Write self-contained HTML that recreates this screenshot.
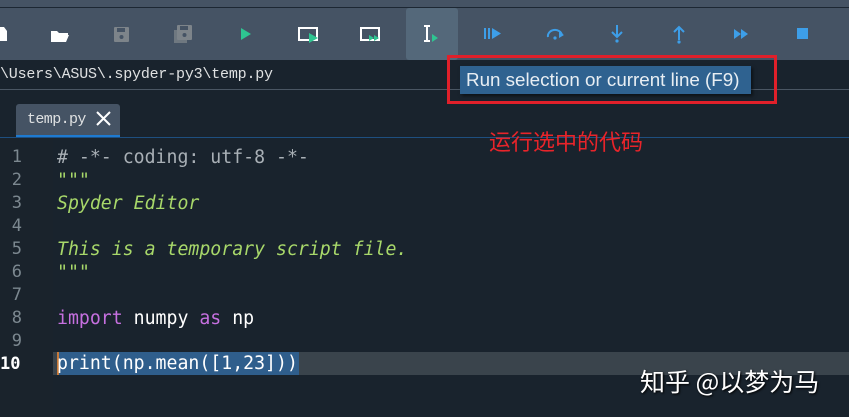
<!DOCTYPE html>
<html><head><meta charset="utf-8"><style>
body{margin:0;width:849px;height:417px;overflow:hidden;background:#19232d;position:relative;font-family:"Liberation Sans",sans-serif}
.abs{position:absolute}
.tb{left:0;top:0;width:849px;height:60px;background:#455364}
.ln{left:0;top:7px;width:849px;height:1px;background:#1c2733}
.path{left:0;top:66px;color:#dfe1e2;font-family:"Liberation Mono","Noto Sans CJK SC",monospace;font-size:15px;letter-spacing:-0.2px}
.code{font-family:"DejaVu Sans Mono",monospace;font-size:18.2px;position:absolute;left:57px;white-space:pre}
.num{font-family:"DejaVu Sans Mono",monospace;font-size:17px;position:absolute;left:8px;color:#7c8890;width:14px;text-align:right}
</style></head><body>
<div class="abs tb"></div>
<div class="abs ln"></div>
<div class="abs" style="left:406px;top:8px;width:52px;height:52px;background:#54687a;border-radius:3px"></div>
<svg class="abs" style="left:0;top:0" width="849" height="60">
<path d="M-2 27h6l3 4v10h-9z" fill="#fff"/>
<path d="M51 31h6l2 2h9v2h-14l-3 7z M51 42l3-7h15l-3 7z" fill="#fff"/>
<rect x="114" y="27" width="15" height="15" rx="1" fill="#7d848a"/><rect x="117" y="28" width="8" height="4" fill="#455364"/><circle cx="121.5" cy="37" r="2" fill="#455364"/>
<rect x="174" y="30" width="13" height="13" fill="#6f7880"/><rect x="177" y="25" width="15" height="15" rx="1" fill="#7d848a"/><rect x="180" y="26" width="8" height="4" fill="#455364"/><circle cx="184.5" cy="35" r="2" fill="#455364"/>
<path d="M241 28l10 6-10 6z" fill="#2ec591"/>
<rect x="299" y="28" width="18" height="12" fill="none" stroke="#fff" stroke-width="2"/><path d="M309 33l9 5-9 5z" fill="#2ec591"/>
<rect x="361" y="28" width="18" height="12" fill="none" stroke="#fff" stroke-width="2"/><path d="M369 35l5 3-5 3z M374 35l5 3-5 3z" fill="#2ec591"/>
<path d="M424 26h6M424 41h6M427 26v15" stroke="#fff" stroke-width="2"/><path d="M432 34l6 4-6 4z" fill="#2ec591"/>
<path d="M485 28v11M489 28v11" stroke="#3d9ee8" stroke-width="2"/><path d="M492 28l9 5.5-9 5.5z" fill="#3d9ee8"/>
<path d="M548 37a7 6 0 0 1 14 -2" fill="none" stroke="#3d9ee8" stroke-width="2"/><path d="M559 32l5 3-5 3z" fill="#3d9ee8"/><circle cx="555" cy="38" r="1.6" fill="#3d9ee8"/>
<path d="M617 25v12M612 32l5 5 5-5" fill="none" stroke="#3d9ee8" stroke-width="2"/><circle cx="617" cy="41" r="1.6" fill="#3d9ee8"/>
<path d="M679 28v12M674 32l5-5 5 5" fill="none" stroke="#3d9ee8" stroke-width="2"/><circle cx="679" cy="42" r="1.6" fill="#3d9ee8"/>
<path d="M734 29l7 5-7 5z M741 29l7 5-7 5z" fill="#3d9ee8"/>
<rect x="797" y="28" width="11" height="11" fill="#3d9ee8"/>
</svg>
<div class="abs path">\Users\ASUS\.spyder-py3\temp.py</div>
<div class="abs" style="left:0;top:89px;width:849px;height:1px;background:#4a5663"></div>
<div class="abs" style="left:16px;top:104px;width:104px;height:32px;background:#455364;border-radius:3px 3px 0 0"></div>
<div class="abs" style="left:16px;top:135px;width:104px;height:3px;background:#1e7ad0"></div>
<div class="abs" style="left:0;top:137px;width:849px;height:1px;background:#1e4f80"></div>
<div class="abs" style="left:27px;top:111px;color:#dfe1e2;font-family:'Liberation Mono',monospace;font-size:15px;letter-spacing:-0.6px">temp.py</div>
<svg class="abs" style="left:96px;top:111px" width="15" height="15"><path d="M1 1l13 13M14 1L1 14" stroke="#fff" stroke-width="2"/></svg>
<div class="abs" style="left:0;top:138px;width:53px;height:279px;background:#1a232c"></div>
<div class="abs" style="left:53px;top:352px;width:796px;height:23px;background:#3a444c"></div>
<div class="abs" style="left:57px;top:352px;width:242px;height:23px;background:#2f5e8c"></div>
<div class="abs" style="left:57px;top:352px;width:2px;height:23px;background:#c77a3a"></div>
<div class="num" style="top:147px">1</div><div class="num" style="top:170px">2</div><div class="num" style="top:193px">3</div><div class="num" style="top:216px">4</div><div class="num" style="top:239px">5</div><div class="num" style="top:262px">6</div><div class="num" style="top:285px">7</div><div class="num" style="top:308px">8</div><div class="num" style="top:331px">9</div><div class="num" style="top:354px;left:0;width:20px;color:#fff;font-weight:bold">10</div>
<div class="code" style="top:147px;color:#a9b0b6"># -*- coding: utf-8 -*-</div>
<div class="code" style="top:170px;color:#a8d86a;font-style:italic">"""</div>
<div class="code" style="top:193px;color:#a8d86a;font-style:italic">Spyder Editor</div>
<div class="code" style="top:239px;color:#a8d86a;font-style:italic">This is a temporary script file.</div>
<div class="code" style="top:262px;color:#a8d86a;font-style:italic">"""</div>
<div class="code" style="top:308px;color:#fff"><span style="color:#c670e0">import</span> numpy <span style="color:#c670e0">as</span> np</div>
<div class="code" style="top:353px;color:#fff">print(np.mean([1,23]))</div>
<div class="abs" style="left:447px;top:55px;width:330px;height:49px;border:3px solid #e0202a;box-sizing:border-box"></div>
<div class="abs" style="left:460px;top:66px;width:291px;height:28px;background:#2f6290;box-shadow:2px 2px 3px rgba(0,0,0,.5)"></div>
<div class="abs" style="left:466px;top:69px;color:#e8eef3;font-size:18.8px;white-space:nowrap">Run selection or current line (F9)</div>
<div class="abs" style="left:489px;top:127px;color:#e8242a;font-size:22px;font-family:'Noto Sans CJK SC',sans-serif;line-height:28px">运行选中的代码</div>
<div class="abs" style="left:640px;top:364px;color:#fff;font-size:25px;line-height:34px;font-family:'Noto Sans CJK SC',sans-serif;text-shadow:1px 1px 2px #000;white-space:nowrap">知乎 @以梦为马</div>
</body></html>
